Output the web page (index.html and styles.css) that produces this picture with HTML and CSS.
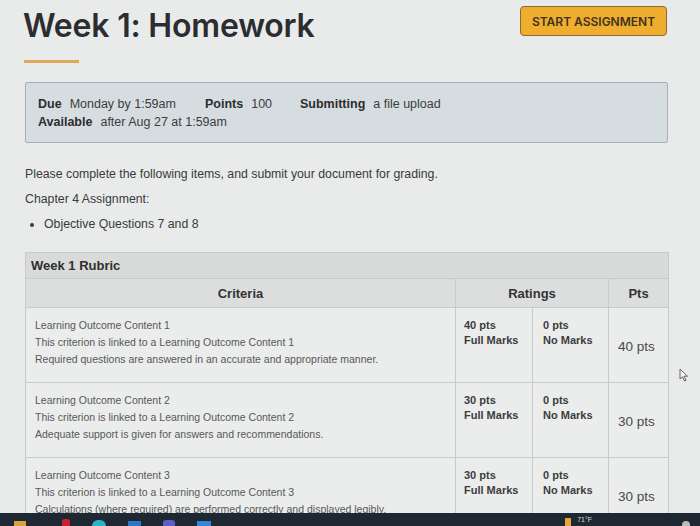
FILE: index.html
```html
<!DOCTYPE html>
<html>
<head>
<meta charset="utf-8">
<link rel="stylesheet" href="styles.css">
</head>
<body>
<div class="page">
  <header class="head">
    <h1 class="title">Week 1: Homework</h1>
    <button class="start">START ASSIGNMENT</button>
  </header>
  <div class="rule"></div>
  <div class="info">
    <div class="info-row">
      <span class="pair due"><b>Due</b>Monday by 1:59am</span>
      <span class="pair points"><b>Points</b>100</span>
      <span class="pair"><b>Submitting</b>a file upload</span>
    </div>
    <div class="info-row">
      <span class="pair"><b>Available</b>after Aug 27 at 1:59am</span>
    </div>
  </div>
  <div class="desc">
    <p>Please complete the following items, and submit your document for grading.</p>
    <p>Chapter 4 Assignment:</p>
    <ul><li>Objective Questions 7 and 8</li></ul>
  </div>
  <table class="rubric">
    <colgroup><col class="c-crit"><col class="c-r1"><col class="c-r2"><col class="c-pts"></colgroup>
    <thead>
      <tr><th colspan="4" class="rub-title">Week 1 Rubric</th></tr>
      <tr class="colhead"><th>Criteria</th><th colspan="2">Ratings</th><th>Pts</th></tr>
    </thead>
    <tbody>
      <tr>
        <td class="crit"><div>Learning Outcome Content 1</div><div>This criterion is linked to a Learning Outcome Content 1</div><div>Required questions are answered in an accurate and appropriate manner.</div></td>
        <td class="rate"><div>40 pts</div><div>Full Marks</div></td>
        <td class="rate r2"><div>0 pts</div><div>No Marks</div></td>
        <td class="pts">40 pts</td>
      </tr>
      <tr>
        <td class="crit"><div>Learning Outcome Content 2</div><div>This criterion is linked to a Learning Outcome Content 2</div><div>Adequate support is given for answers and recommendations.</div></td>
        <td class="rate"><div>30 pts</div><div>Full Marks</div></td>
        <td class="rate r2"><div>0 pts</div><div>No Marks</div></td>
        <td class="pts">30 pts</td>
      </tr>
      <tr>
        <td class="crit"><div>Learning Outcome Content 3</div><div>This criterion is linked to a Learning Outcome Content 3</div><div>Calculations (where required) are performed correctly and displayed legibly.</div></td>
        <td class="rate"><div>30 pts</div><div>Full Marks</div></td>
        <td class="rate r2"><div>0 pts</div><div>No Marks</div></td>
        <td class="pts">30 pts</td>
      </tr>
    </tbody>
  </table>
</div>
<svg class="cursor" width="10" height="14" viewBox="0 0 10 14"><path d="M1 1 L1 11 L3.5 8.8 L5.5 13 L7 12.3 L5 8.2 L8.5 8.2 Z" fill="#f4f4f4" stroke="#555" stroke-width="0.9"/></svg>
<div class="taskbar">
  <span class="tb folder"></span>
  <span class="tb red"></span>
  <span class="tb edge"></span>
  <span class="tb blue"></span>
  <span class="tb teams"></span>
  <span class="tb blue2"></span>
  <span class="tb-spacer"></span>
  <span class="tb weather"></span>
  <span class="tb-text">71°F</span>
  <span class="tb dot"></span>
</div>
</body>
</html>
```
FILE: styles.css
```css
html, body {
  margin: 0;
  padding: 0;
  height: 526px;
  overflow: hidden;
  background: #e9ebeb;
  font-family: "Liberation Sans", Arial, sans-serif;
  color: #3a3a3a;
}
.page {
  padding: 0 32px 0 25px;
}
.head {
  display: flex;
  justify-content: space-between;
  align-items: flex-start;
  padding-top: 6px;
}
.title {
  margin: 1px 0 0 -2px;
  font-family: Inter, "Open Sans", sans-serif;
  font-weight: 600;
  font-size: 32px;
  letter-spacing: -0.2px;
  color: #2c2d30;
  line-height: 38px;
}
.start {
  margin: 0 1px 0 0;
  width: 147px;
  height: 30px;
  background: #f0ae2e;
  border: 1px solid #8c6a34;
  border-radius: 4px;
  font-family: Inter, "Open Sans", sans-serif;
  font-weight: 600;
  font-size: 12px;
  color: #3f3220;
  padding: 0;
}
.rule {
  width: 55px;
  height: 3px;
  background: #e2a657;
  margin: 15px 0 0 -1px;
}
.info {
  margin-top: 19px;
  height: 61px;
  box-sizing: border-box;
  background: #d6dde1;
  border: 1px solid #a7b0b5;
  border-radius: 2px;
  padding: 12px 0 0 12px;
  font-size: 12.5px;
  color: #3c3c3c;
}
.info-row {
  display: flex;
  line-height: 18px;
}
.pair b {
  font-weight: bold;
  color: #2d2d2d;
  margin-right: 8px;
}
.due { width: 167px; }
.points { width: 95px; }
.desc {
  margin-top: 23px;
  font-size: 12.3px;
  color: #3a3a3a;
}
.desc p {
  margin: 0 0 9px 0;
  line-height: 16px;
}
.desc ul {
  margin: 0;
  padding-left: 19px;
  line-height: 16px;
}
.rubric {
  margin-top: 20px;
  width: 643px;
  border-collapse: collapse;
  table-layout: fixed;
  border: 1px solid #c9cbcb;
}
.c-crit { width: 430px; }
.c-r1 { width: 77px; }
.c-r2 { width: 76px; }
.c-pts { width: 60px; }
.rubric th, .rubric td {
  border: 1px solid #c9cbcb;
}
.rub-title {
  background: #d9dada;
  text-align: left;
  height: 25px;
  padding: 0 0 0 5px;
  font-size: 13px;
  font-weight: bold;
  color: #2f2f2f;
}
.colhead th {
  background: #dcdddd;
  height: 28px;
  padding: 0;
  font-size: 13px;
  font-weight: bold;
  color: #333;
}
.rubric td {
  background: #ebecec;
  vertical-align: top;
  height: 75px;
  box-sizing: border-box;
}
.crit {
  padding: 9px 0 0 9px;
  font-size: 10.5px;
  color: #585858;
  line-height: 16px;
}
.crit div + div { margin-top: 1px; }
.rate {
  padding: 10px 0 0 8px;
  font-size: 11px;
  font-weight: bold;
  color: #3d3d3d;
  line-height: 15px;
}
.r2 { padding-left: 10px; }
.pts {
  vertical-align: middle !important;
  padding: 2px 0 0 9px;
  font-size: 13.5px;
  color: #4a4a4a;
}
.cursor {
  position: absolute;
  left: 679px;
  top: 368px;
}
.taskbar {
  position: fixed;
  left: 0;
  right: 0;
  bottom: 0;
  height: 13px;
  background: #1e2833;
  display: flex;
  align-items: flex-end;
  padding-left: 14px;
}
.tb {
  display: block;
  height: 5px;
  margin-right: 22px;
}
.folder { width: 12px; background: #d6a33b; }
.red { width: 8px; height: 7px; background: #c8232c; border-radius: 3px 3px 0 0; margin-left: 14px; }
.edge { width: 14px; height: 6px; background: #2bb2c4; border-radius: 7px 7px 0 0; }
.blue { width: 13px; background: #2a78c8; }
.teams { width: 12px; height: 6px; background: #5a5fc8; border-radius: 3px 3px 0 0; }
.blue2 { width: 14px; background: #3086d8; }
.tb-spacer { flex: 1; }
.weather { width: 6px; height: 8px; background: #e8a33a; margin-right: 6px; }
.tb-text { color: #ddd; font-size: 7px; line-height: 9px; margin: 0 90px 2px 0; }
.dot { width: 8px; height: 5px; background: #bbb; border-radius: 4px 4px 0 0; margin-right: 10px; }
```
